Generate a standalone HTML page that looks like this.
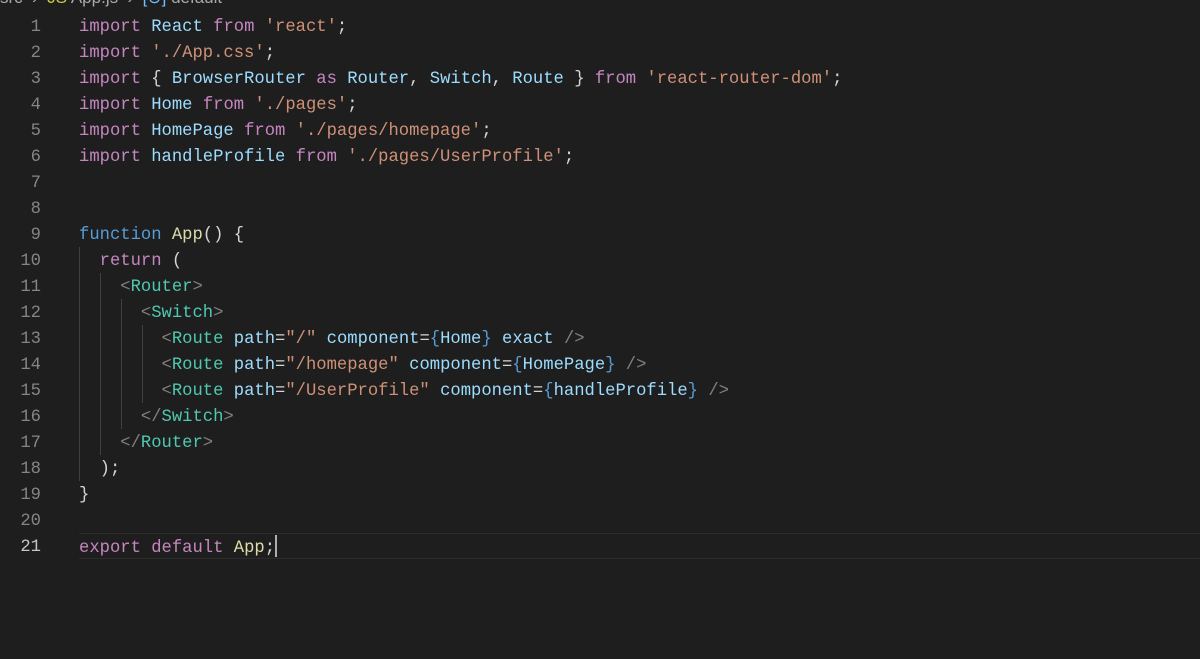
<!DOCTYPE html>
<html><head><meta charset="utf-8"><style>
html,body{margin:0;padding:0;background:#1e1e1e;width:1200px;height:659px;overflow:hidden}
.code{position:absolute;left:0;top:15px;font-family:"Liberation Mono",monospace;font-size:17.2px;line-height:26px;color:#d4d4d4}
.ln{position:absolute;left:0;width:41px;text-align:right;color:#858585}
.tx{position:absolute;left:79px;white-space:pre}
.row{position:relative;height:26px}
.k{color:#c586c0}.v{color:#9cdcfe}.s{color:#ce9178}.f{color:#dcdcaa}.t{color:#4ec9b0}.p{color:#808080}.b{color:#569cd6}
.g{position:absolute;width:1px;background:#404040}
.cur{position:absolute;left:79px;right:0;top:533px;height:24px;border-top:1px solid #2c2c2c;border-bottom:1px solid #2c2c2c}
.bc{position:absolute;top:-12px;left:0;font-family:"Liberation Sans",sans-serif;font-size:17px;color:#a9a9a9;white-space:pre}
</style></head><body>
<div class="bc">src  ›  <span style="color:#cbcb41">JS</span> App.js  ›  <span style="color:#75beff">[⊙]</span> default</div>
<div class="cur"></div>
<div class="g" style="left:79px;top:247px;height:234px"></div>
<div class="g" style="left:100px;top:273px;height:182px"></div>
<div class="g" style="left:121px;top:299px;height:130px"></div>
<div class="g" style="left:142px;top:325px;height:78px"></div>
<div class="code"><div class="row"><span class="ln">1</span><span class="tx"><span class="k">import</span> <span class="v">React</span> <span class="k">from</span> <span class="s">'react'</span>;</span></div><div class="row"><span class="ln">2</span><span class="tx"><span class="k">import</span> <span class="s">'./App.css'</span>;</span></div><div class="row"><span class="ln">3</span><span class="tx"><span class="k">import</span> { <span class="v">BrowserRouter</span> <span class="k">as</span> <span class="v">Router</span>, <span class="v">Switch</span>, <span class="v">Route</span> } <span class="k">from</span> <span class="s">'react-router-dom'</span>;</span></div><div class="row"><span class="ln">4</span><span class="tx"><span class="k">import</span> <span class="v">Home</span> <span class="k">from</span> <span class="s">'./pages'</span>;</span></div><div class="row"><span class="ln">5</span><span class="tx"><span class="k">import</span> <span class="v">HomePage</span> <span class="k">from</span> <span class="s">'./pages/homepage'</span>;</span></div><div class="row"><span class="ln">6</span><span class="tx"><span class="k">import</span> <span class="v">handleProfile</span> <span class="k">from</span> <span class="s">'./pages/UserProfile'</span>;</span></div><div class="row"><span class="ln">7</span></div><div class="row"><span class="ln">8</span></div><div class="row"><span class="ln">9</span><span class="tx"><span class="b">function</span> <span class="f">App</span>() {</span></div><div class="row"><span class="ln">10</span><span class="tx">  <span class="k">return</span> (</span></div><div class="row"><span class="ln">11</span><span class="tx">    <span class="p">&lt;</span><span class="t">Router</span><span class="p">&gt;</span></span></div><div class="row"><span class="ln">12</span><span class="tx">      <span class="p">&lt;</span><span class="t">Switch</span><span class="p">&gt;</span></span></div><div class="row"><span class="ln">13</span><span class="tx">        <span class="p">&lt;</span><span class="t">Route</span> <span class="v">path</span>=<span class="s">"/"</span> <span class="v">component</span>=<span class="b">{</span><span class="v">Home</span><span class="b">}</span> <span class="v">exact</span> <span class="p">/&gt;</span></span></div><div class="row"><span class="ln">14</span><span class="tx">        <span class="p">&lt;</span><span class="t">Route</span> <span class="v">path</span>=<span class="s">"/homepage"</span> <span class="v">component</span>=<span class="b">{</span><span class="v">HomePage</span><span class="b">}</span> <span class="p">/&gt;</span></span></div><div class="row"><span class="ln">15</span><span class="tx">        <span class="p">&lt;</span><span class="t">Route</span> <span class="v">path</span>=<span class="s">"/UserProfile"</span> <span class="v">component</span>=<span class="b">{</span><span class="v">handleProfile</span><span class="b">}</span> <span class="p">/&gt;</span></span></div><div class="row"><span class="ln">16</span><span class="tx">      <span class="p">&lt;/</span><span class="t">Switch</span><span class="p">&gt;</span></span></div><div class="row"><span class="ln">17</span><span class="tx">    <span class="p">&lt;/</span><span class="t">Router</span><span class="p">&gt;</span></span></div><div class="row"><span class="ln">18</span><span class="tx">  );</span></div><div class="row"><span class="ln">19</span><span class="tx">}</span></div><div class="row"><span class="ln">20</span></div><div class="row"><span class="ln" style="color:#c6c6c6">21</span><span class="tx"><span class="k">export</span> <span class="k">default</span> <span class="f">App</span>;<span style="display:inline-block;width:2px;height:22px;background:#aeafad;vertical-align:-5px"></span></span></div></div>
</body></html>
